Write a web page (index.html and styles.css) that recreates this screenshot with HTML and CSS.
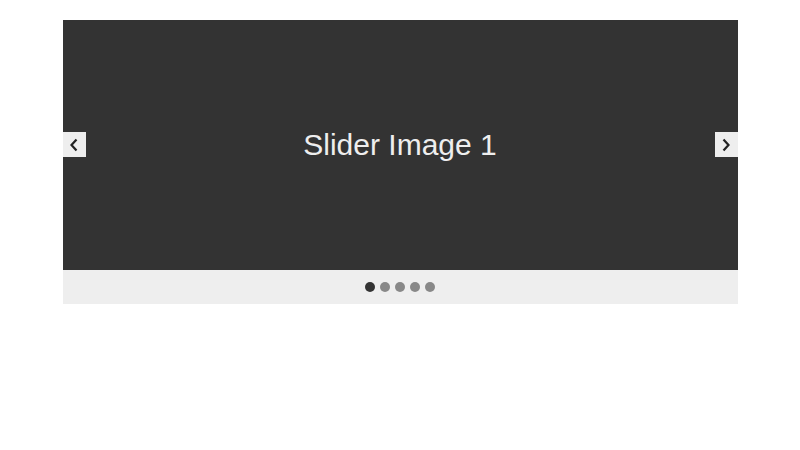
FILE: index.html
```html
<!DOCTYPE html>
<html lang="en">
  <head>
    <meta charset="UTF-8" />
    <title>Slider</title>
    <link rel="stylesheet" href="styles.css">
  </head>
  <body>
    <div class="slider">
      <div class="slides">
        <div class="slide">Slider Image 1</div>
        <button class="arrow prev" aria-label="Previous">
          <svg width="10" height="14" viewBox="0 0 10 14">
            <path d="M7.5 1.5 L2.5 7 L7.5 12.5" fill="none" stroke="#222" stroke-width="2.2" />
          </svg>
        </button>
        <button class="arrow next" aria-label="Next">
          <svg width="10" height="14" viewBox="0 0 10 14">
            <path d="M2.5 1.5 L7.5 7 L2.5 12.5" fill="none" stroke="#222" stroke-width="2.2" />
          </svg>
        </button>
      </div>
      <div class="dots">
        <span class="dot active"></span>
        <span class="dot"></span>
        <span class="dot"></span>
        <span class="dot"></span>
        <span class="dot"></span>
      </div>
    </div>
  </body>
</html>
```

FILE: styles.css
```css
body {
  font-family: "Liberation Sans", Arial, sans-serif;
  margin: 0;
  background: #fff;
}
.slider {
  width: 675px;
  margin: 20px auto 0;
}
.slides {
  position: relative;
  height: 250px;
  background-color: #333;
}
.slide {
  height: 100%;
  display: flex;
  align-items: center;
  justify-content: center;
  color: #eee;
  font-size: 30px;
}
.arrow {
  position: absolute;
  top: 112px;
  width: 23px;
  height: 25px;
  padding: 0;
  border: none;
  background-color: #eee;
  display: flex;
  align-items: center;
  justify-content: center;
  cursor: pointer;
}
.prev {
  left: 0;
}
.next {
  right: 0;
}
.dots {
  height: 34px;
  background-color: #eee;
  display: flex;
  align-items: center;
  justify-content: center;
  gap: 5px;
}
.dot {
  width: 10px;
  height: 10px;
  border-radius: 50%;
  background-color: #888;
}
.dot.active {
  background-color: #333;
}
```
